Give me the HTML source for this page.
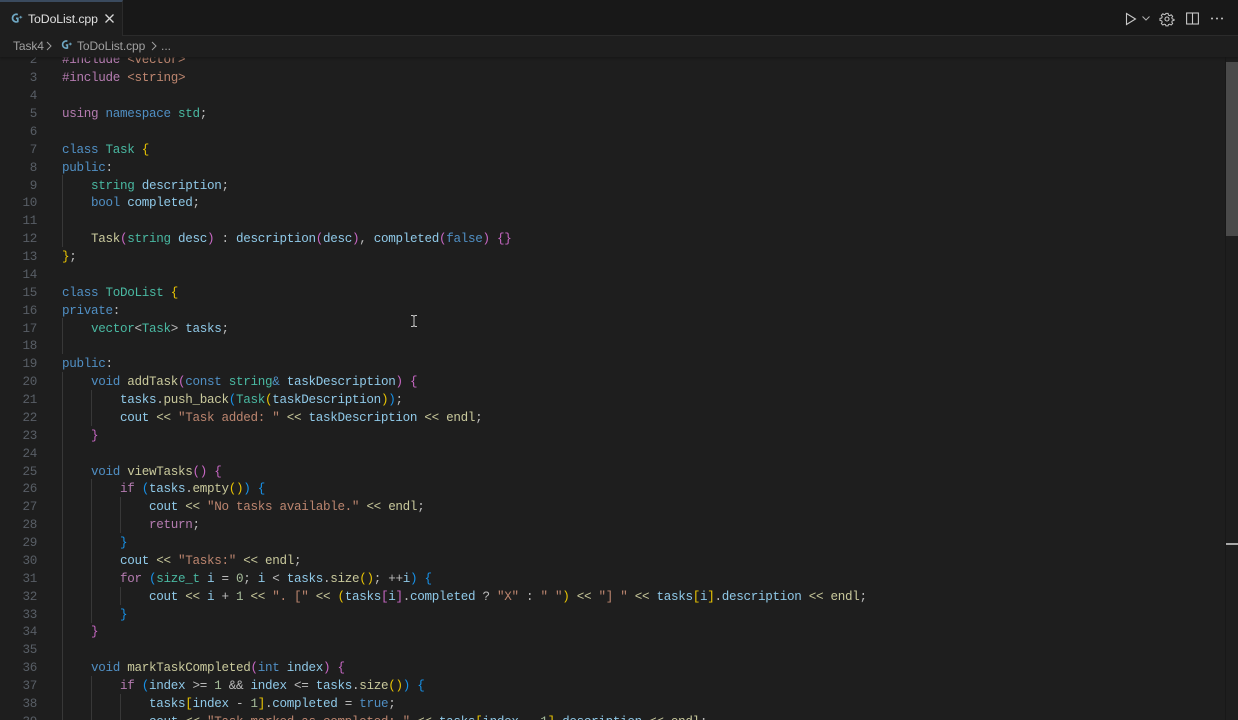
<!DOCTYPE html>
<html><head><meta charset="utf-8"><style>
html,body{margin:0;padding:0;background:#1e1e1e;width:1238px;height:720px;overflow:hidden}
body{position:relative;font-family:"Liberation Sans",sans-serif}
#tabs{position:absolute;left:0;top:0;width:1238px;height:35px;background:#181818;border-bottom:1px solid #2b2b2b}
#tab{position:absolute;left:0;top:0;width:123px;height:36px;background:#1e1e1e;border-top:2px solid #3a4a5e;box-sizing:border-box;border-right:1px solid #2b2b2b}
.ui{position:absolute;white-space:nowrap;font-size:12.3px}
#bc{position:absolute;left:0;top:36px;width:1238px;height:21px;background:#1e1e1e;z-index:3;box-shadow:0 1px 2px #151515}
#code{position:absolute;left:0;top:52.4px;width:1225px;height:668px;overflow:hidden;font:12.6px/17.886px "Liberation Mono",monospace;letter-spacing:-.31px;color:#ccc;opacity:.9}
#code div{height:17.886px;padding-left:62px;position:relative;white-space:pre}
#code i{position:absolute;left:0;width:37px;text-align:right;font-style:normal;color:#5f666e;letter-spacing:-.31px}
.k{color:#c586c0}.b{color:#569cd6}.t{color:#4ec9b0}.f{color:#dcdcaa}.v{color:#9cdcfe}.s{color:#ce9178}.y{color:#ffd700}.p{color:#da70d6}.l{color:#179fff}.n{color:#b5cea8}
.g{position:absolute;width:1px;background:#383838}
svg{position:absolute;overflow:visible}
</style></head><body>
<div class="g" style="left:62px;top:175px;height:72px"></div>
<div class="g" style="left:62px;top:318px;height:36px"></div>
<div class="g" style="left:62px;top:372px;height:348px"></div>
<div class="g" style="left:91px;top:390px;height:36px"></div>
<div class="g" style="left:91px;top:479px;height:144px"></div>
<div class="g" style="left:91px;top:676px;height:44px"></div>
<div class="g" style="left:120px;top:497px;height:36px"></div>
<div class="g" style="left:120px;top:587px;height:18px"></div>
<div class="g" style="left:120px;top:694px;height:26px"></div>
<div id="code"><div><i>2</i><span class="k">#include</span> <span class="s">&lt;vector&gt;</span></div><div><i>3</i><span class="k">#include</span> <span class="s">&lt;string&gt;</span></div><div><i>4</i></div><div><i>5</i><span class="k">using</span> <span class="b">namespace</span> <span class="t">std</span>;</div><div><i>6</i></div><div><i>7</i><span class="b">class</span> <span class="t">Task</span> <span class="y">{</span></div><div><i>8</i><span class="b">public</span>:</div><div><i>9</i>    <span class="t">string</span> <span class="v">description</span>;</div><div><i>10</i>    <span class="b">bool</span> <span class="v">completed</span>;</div><div><i>11</i></div><div><i>12</i>    <span class="f">Task</span><span class="p">(</span><span class="t">string</span> <span class="v">desc</span><span class="p">)</span> : <span class="v">description</span><span class="p">(</span><span class="v">desc</span><span class="p">)</span>, <span class="v">completed</span><span class="p">(</span><span class="b">false</span><span class="p">)</span> <span class="p">{}</span></div><div><i>13</i><span class="y">}</span>;</div><div><i>14</i></div><div><i>15</i><span class="b">class</span> <span class="t">ToDoList</span> <span class="y">{</span></div><div><i>16</i><span class="b">private</span>:</div><div><i>17</i>    <span class="t">vector</span>&lt;<span class="t">Task</span>&gt; <span class="v">tasks</span>;</div><div><i>18</i></div><div><i>19</i><span class="b">public</span>:</div><div><i>20</i>    <span class="b">void</span> <span class="f">addTask</span><span class="p">(</span><span class="b">const</span> <span class="t">string</span><span class="b">&amp;</span> <span class="v">taskDescription</span><span class="p">)</span> <span class="p">{</span></div><div><i>21</i>        <span class="v">tasks</span>.<span class="f">push_back</span><span class="l">(</span><span class="t">Task</span><span class="y">(</span><span class="v">taskDescription</span><span class="y">)</span><span class="l">)</span>;</div><div><i>22</i>        <span class="v">cout</span> <span class="f">&lt;&lt;</span> <span class="s">"Task added: "</span> <span class="f">&lt;&lt;</span> <span class="v">taskDescription</span> <span class="f">&lt;&lt;</span> <span class="f">endl</span>;</div><div><i>23</i>    <span class="p">}</span></div><div><i>24</i></div><div><i>25</i>    <span class="b">void</span> <span class="f">viewTasks</span><span class="p">()</span> <span class="p">{</span></div><div><i>26</i>        <span class="k">if</span> <span class="l">(</span><span class="v">tasks</span>.<span class="f">empty</span><span class="y">()</span><span class="l">)</span> <span class="l">{</span></div><div><i>27</i>            <span class="v">cout</span> <span class="f">&lt;&lt;</span> <span class="s">"No tasks available."</span> <span class="f">&lt;&lt;</span> <span class="f">endl</span>;</div><div><i>28</i>            <span class="k">return</span>;</div><div><i>29</i>        <span class="l">}</span></div><div><i>30</i>        <span class="v">cout</span> <span class="f">&lt;&lt;</span> <span class="s">"Tasks:"</span> <span class="f">&lt;&lt;</span> <span class="f">endl</span>;</div><div><i>31</i>        <span class="k">for</span> <span class="l">(</span><span class="t">size_t</span> <span class="v">i</span> = <span class="n">0</span>; <span class="v">i</span> &lt; <span class="v">tasks</span>.<span class="f">size</span><span class="y">()</span>; ++<span class="v">i</span><span class="l">)</span> <span class="l">{</span></div><div><i>32</i>            <span class="v">cout</span> <span class="f">&lt;&lt;</span> <span class="v">i</span> + <span class="n">1</span> <span class="f">&lt;&lt;</span> <span class="s">". ["</span> <span class="f">&lt;&lt;</span> <span class="y">(</span><span class="v">tasks</span><span class="p">[</span><span class="v">i</span><span class="p">]</span>.<span class="v">completed</span> ? <span class="s">"X"</span> : <span class="s">" "</span><span class="y">)</span> <span class="f">&lt;&lt;</span> <span class="s">"] "</span> <span class="f">&lt;&lt;</span> <span class="v">tasks</span><span class="y">[</span><span class="v">i</span><span class="y">]</span>.<span class="v">description</span> <span class="f">&lt;&lt;</span> <span class="f">endl</span>;</div><div><i>33</i>        <span class="l">}</span></div><div><i>34</i>    <span class="p">}</span></div><div><i>35</i></div><div><i>36</i>    <span class="b">void</span> <span class="f">markTaskCompleted</span><span class="p">(</span><span class="b">int</span> <span class="v">index</span><span class="p">)</span> <span class="p">{</span></div><div><i>37</i>        <span class="k">if</span> <span class="l">(</span><span class="v">index</span> &gt;= <span class="n">1</span> &amp;&amp; <span class="v">index</span> &lt;= <span class="v">tasks</span>.<span class="f">size</span><span class="y">()</span><span class="l">)</span> <span class="l">{</span></div><div><i>38</i>            <span class="v">tasks</span><span class="y">[</span><span class="v">index</span> - <span class="n">1</span><span class="y">]</span>.<span class="v">completed</span> = <span class="b">true</span>;</div><div><i>39</i>            <span class="v">cout</span> <span class="f">&lt;&lt;</span> <span class="s">"Task marked as completed: "</span> <span class="f">&lt;&lt;</span> <span class="v">tasks</span><span class="y">[</span><span class="v">index</span> - <span class="n">1</span><span class="y">]</span>.<span class="v">description</span> <span class="f">&lt;&lt;</span> <span class="f">endl</span>;</div></div>
<div id="bc"></div>
<div id="tabs" style="z-index:4"><div id="tab"></div></div>
<div style="position:absolute;left:0;top:0;width:1238px;height:57px;z-index:5">
<svg style="left:11px;top:13px" width="12" height="12" viewBox="0 0 12 12" fill="none" stroke="#6fa8c4" stroke-width="1.7"><path d="M6.8 1.6A3.8 3.8 0 1 0 6.8 8.6V5.4H5"/><path d="M8.2 4.2h3M9.7 2.9v2.6" stroke-width=".9"/></svg>
<div class="ui" style="left:28px;top:12px;color:#e0e0e0;letter-spacing:-.1px">ToDoList.cpp</div>
<svg style="left:104px;top:13px" width="11" height="11" viewBox="0 0 11 11" fill="none" stroke="#d8d8d8" stroke-width="1.3"><path d="M1.5 1.5l8 8M9.5 1.5l-8 8"/></svg>
<div class="ui" style="left:13px;top:39px;color:#a0a0a0;font-size:12px;letter-spacing:-.1px">Task4</div>
<svg style="left:46px;top:41px" width="7" height="10" viewBox="0 0 7 10" fill="none" stroke="#a0a0a0" stroke-width="1"><path d="M1 1l4 4-4 4"/></svg>
<svg style="left:61px;top:40px" width="12" height="11" viewBox="0 0 12 11" fill="none" stroke="#6fa8c4" stroke-width="1.6"><path d="M6.4 1.2A3.6 3.6 0 1 0 6.4 8V5H4.8"/><path d="M7.8 4h3M9.3 2.6v2.8" stroke-width=".9"/></svg>
<div class="ui" style="left:77px;top:39px;color:#a0a0a0;font-size:12px;letter-spacing:-.1px">ToDoList.cpp</div>
<svg style="left:151px;top:41px" width="7" height="10" viewBox="0 0 7 10" fill="none" stroke="#a0a0a0" stroke-width="1"><path d="M1 1l4 4-4 4"/></svg>
<div class="ui" style="left:161px;top:39px;color:#a0a0a0;font-size:12px">...</div>
<svg style="left:1125px;top:12px" width="12" height="14" viewBox="0 0 12 14" fill="none" stroke="#c8c8c8" stroke-width="1.1"><path d="M1.5 1.5v11l9-5.5z"/></svg>
<svg style="left:1142px;top:16px" width="8" height="5" viewBox="0 0 8 5" fill="none" stroke="#b0b0b0" stroke-width="1"><path d="M.5.5l3.5 3.5 3.5-3.5"/></svg>
<svg style="left:1160px;top:11.5px" width="14" height="14" viewBox="0 0 14 14" fill="none" stroke="#c8c8c8" stroke-width="1.1"><circle cx="7" cy="7" r="2"/><path d="M5.8 .8h2.4l.4 1.9 1.4.6 1.6-1 1.7 1.7-1 1.6.6 1.4 1.9.4v1.2l-1.9.4-.6 1.4 1 1.6-1.7 1.7-1.6-1-1.4.6-.4 1.4H5.8l-.4-1.4-1.4-.6-1.6 1-1.7-1.7 1-1.6-.6-1.4-1.9-.4V6.3l1.9-.4.6-1.4-1-1.6 1.7-1.7 1.6 1 1.4-.6z" transform="translate(.7 .7) scale(.9)"/></svg>
<svg style="left:1186px;top:12px" width="13" height="13" viewBox="0 0 13 13" fill="none" stroke="#c8c8c8" stroke-width="1.1"><rect x=".6" y="1" width="11.8" height="11"/><path d="M6.5 1v11"/></svg>
<svg style="left:1210px;top:17px" width="14" height="3" viewBox="0 0 14 3" fill="#c8c8c8"><circle cx="2" cy="1.5" r="1"/><circle cx="7" cy="1.5" r="1"/><circle cx="12" cy="1.5" r="1"/></svg>
</div>
<div style="position:absolute;left:1225px;top:57px;width:13px;height:663px;background:#1e1e1e;border-left:1px solid #181818;box-sizing:border-box"></div>
<div style="position:absolute;left:1226px;top:62px;width:12px;height:174px;background:#4a4a4a"></div>
<div style="position:absolute;left:1226px;top:543px;width:12px;height:2px;background:#a8a8a8"></div>
<svg style="left:410px;top:315px" width="8" height="12" viewBox="0 0 8 12" fill="none" stroke="#c8c8c8" stroke-width="1"><path d="M1 .5h2l1 1 1-1h2M4 1.5v9M1 11.5h2l1-1 1 1h2"/></svg>
</body></html>
